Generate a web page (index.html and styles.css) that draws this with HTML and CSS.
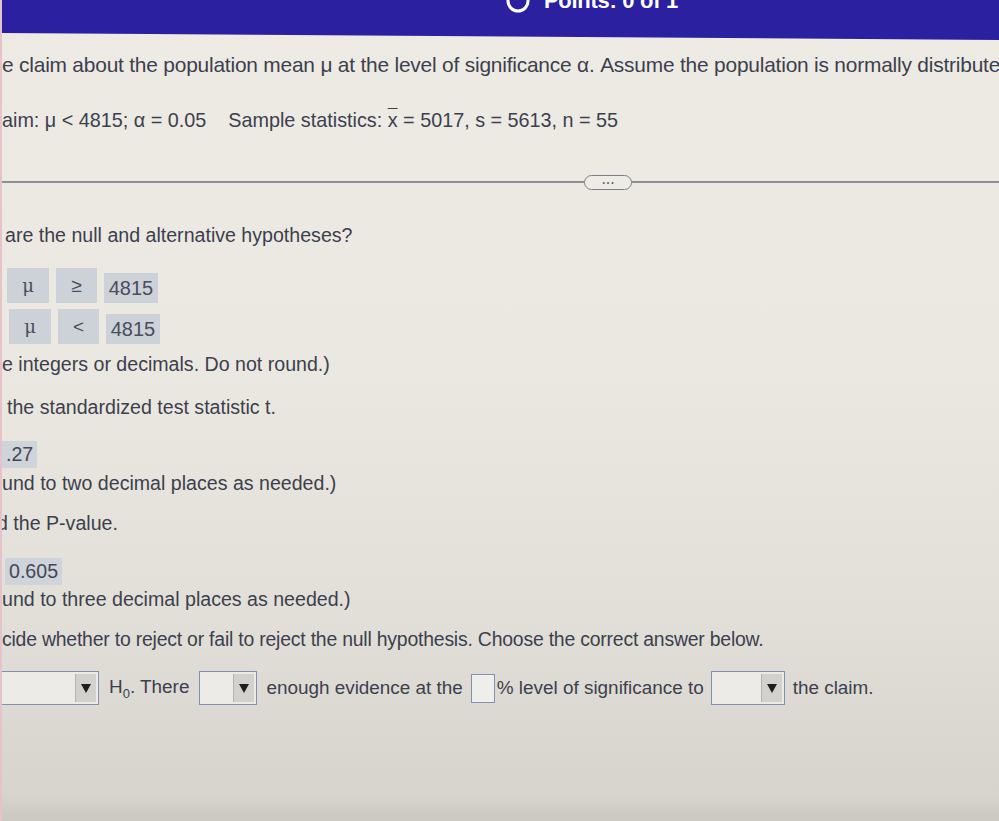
FILE: index.html
```html
<!DOCTYPE html>
<html lang="en">
<head>
<meta charset="utf-8">
<title>Hypothesis test</title>
<link rel="stylesheet" href="styles.css">
</head>
<body>
<header class="topbar">
  <div class="points">
    <svg class="points-icon" width="26" height="26" viewBox="0 0 26 26"><circle cx="13" cy="13" r="10" fill="none" stroke="#ffffff" stroke-width="3"/></svg>
    <span class="points-text">Points: 0 of 1</span>
  </div>
</header>
<main class="content">
  <p class="line l1">e claim about the population mean μ at the level of significance α. Assume the population is normally distributed</p>
  <p class="line l2"><span>aim: μ &lt; 4815; α = 0.05</span><span class="stats">Sample statistics: <span class="xbar">x</span> = 5017, s = 5613, n = 55</span></p>
  <div class="divider"><span class="rule short"></span><span class="pill">• • •</span><span class="rule"></span></div>
  <p class="line q">are the null and alternative hypotheses?</p>
  <div class="hyp">
    <div class="hrow r1"><span class="cell sym">μ</span><span class="cell op">≥</span><span class="cell val">4815</span></div>
    <div class="hrow r2"><span class="cell sym">μ</span><span class="cell op">&lt;</span><span class="cell val">4815</span></div>
  </div>
  <p class="line t1">e integers or decimals. Do not round.)</p>
  <p class="line t2">the standardized test statistic t.</p>
  <div class="ans a1">.27</div>
  <p class="line t3">und to two decimal places as needed.)</p>
  <p class="line t4">d the P-value.</p>
  <div class="ans a2">0.605</div>
  <p class="line t5">und to three decimal places as needed.)</p>
  <p class="line t6">cide whether to reject or fail to reject the null hypothesis. Choose the correct answer below.</p>
  <div class="choice">
    <span class="select s1"><span class="arrow"></span></span>
    <span class="word w1">H<sub>0</sub>. There</span>
    <span class="select s2"><span class="arrow"></span></span>
    <span class="word w2">enough evidence at the</span>
    <span class="blank"></span>
    <span class="word w3">% level of significance to</span>
    <span class="select s3"><span class="arrow"></span></span>
    <span class="word w4">the claim.</span>
  </div>
</main>
</body>
</html>
```

FILE: styles.css
```css
html, body {
  margin: 0;
  padding: 0;
}
body {
  width: 999px;
  height: 821px;
  overflow: hidden;
  font-family: "Liberation Sans", Arial, sans-serif;
  font-size: 19.6px;
  color: #3c3f4e;
  background: linear-gradient(180deg, #eeebe5 0%, #ebe8e1 45%, #e2dfd8 75%, #d6d4cd 97%, #c9c7c0 100%);
  border-left: 2px solid #e6c3c8;
  box-sizing: border-box;
}
.topbar {
  height: 40px;
  background: #2a20a0;
  clip-path: polygon(0 0, 100% 0, 100% 40px, 0 33px);
  overflow: hidden;
}
.points {
  display: flex;
  align-items: center;
  gap: 13px;
  padding-left: 503px;
  margin-top: -12px;
}
.points-icon { display: block; }
.points-text {
  color: #ffffff;
  font-weight: bold;
  font-size: 22px;
  letter-spacing: -0.3px;
}
.content {
  display: flex;
  flex-direction: column;
  align-items: flex-start;
}
.line {
  margin: 0;
  line-height: 24px;
  white-space: nowrap;
}
.l1 { margin-top: 13px; font-size: 20.9px; letter-spacing: -0.2px; }
.l2 { margin-top: 31px; display: flex; font-size: 19.8px; }
.l2 .stats { margin-left: 22px; }
.xbar { text-decoration: overline; }
.divider {
  margin-top: 42px;
  width: 100%;
  height: 16px;
  display: flex;
  align-items: center;
}
.rule {
  flex: 1;
  height: 2px;
  background: #8d8f98;
}
.rule.short { flex: 0 0 582px; }
.pill {
  width: 46px;
  height: 13px;
  border: 1.5px solid #7d7f88;
  border-radius: 8px;
  font-size: 7px;
  line-height: 13px;
  text-align: center;
  color: #5a5c66;
  background: #efece6;
}
.q { margin-top: 33px; padding-left: 3px; }
.hyp {
  margin-top: 21px;
  display: flex;
  flex-direction: column;
  gap: 6px;
}
.hrow {
  display: flex;
  align-items: flex-end;
  gap: 7px;
  padding-left: 5px;
}
.r2 { padding-left: 7px; }
.cell {
  display: flex;
  align-items: center;
  justify-content: center;
  background: #cdd1d8;
  color: #4a4d5a;
}
.sym { width: 42px; height: 35px; font-family: "DejaVu Serif", "Liberation Serif", serif; font-size: 18px; }
.op { width: 41px; height: 35px; font-size: 19px; }
.val { width: 54px; height: 30px; font-size: 20px; }
.t1 { margin-top: 8px; }
.t2 { margin-top: 19px; padding-left: 5px; }
.ans {
  background: #cfd3da;
  height: 27px;
  line-height: 27px;
  color: #444756;
}
.a1 { margin-top: 22px; width: 31px; padding-left: 4px; }
.t3 { margin-top: 3px; }
.t4 { margin-top: 16px; margin-left: -5px; }
.a2 { margin-top: 23px; margin-left: 3px; width: 53px; padding-left: 4px; }
.t5 { margin-top: 2px; }
.t6 { margin-top: 16px; font-size: 19.4px; letter-spacing: -0.2px; }
.choice {
  margin-top: 20px;
  display: flex;
  align-items: center;
  white-space: nowrap;
}
.select {
  height: 34px;
  border: 1.5px solid #7f8fb5;
  background: #ecebe7;
  display: flex;
  justify-content: flex-end;
  align-items: stretch;
  box-sizing: border-box;
}
.s1 { width: 102px; margin-left: -5px; }
.s2 { width: 58px; margin-left: 10px; }
.s3 { width: 74px; margin-left: 7px; }
.arrow {
  width: 20px;
  margin: 2px;
  background: #d2d1ce;
  border-left: 1px solid #b5b4b0;
  position: relative;
}
.arrow::after {
  content: "";
  position: absolute;
  left: 5px;
  top: 10px;
  border-left: 5px solid transparent;
  border-right: 5px solid transparent;
  border-top: 9px solid #1d1d22;
}
.word { font-size: 18.9px; }
.w1 { margin-left: 10px; }
.w1 sub { font-size: 13px; }
.w2 { margin-left: 9px; }
.blank {
  width: 24px;
  height: 29px;
  border: 1.5px solid #7f8fb5;
  background: #efeeea;
  margin-left: 8px;
  box-sizing: border-box;
}
.w3 { margin-left: 2px; }
.w4 { margin-left: 8px; }
```
